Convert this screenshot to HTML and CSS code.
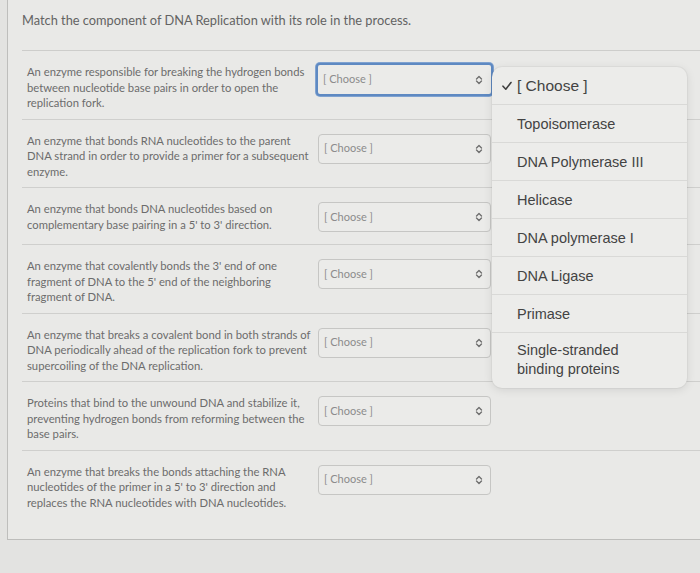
FILE: index.html
```html
<!DOCTYPE html>
<html>
<head>
<meta charset="utf-8">
<link rel="stylesheet" href="styles.css">
</head>
<body>
<div class="page">
  <div class="card">
    <div class="question-text">Match the component of DNA Replication with its role in the process.</div>
    <div class="answers">
      <div class="row">
        <div class="prompt">An enzyme responsible for breaking the hydrogen bonds<br>between nucleotide base pairs in order to open the<br>replication fork.</div>
        <div class="select focused"><span>[ Choose ]</span><svg class="updown" viewBox="0 0 8 10" width="8" height="10"><polyline points="1.5,4 4,1.5 6.5,4"/><polyline points="1.5,6 4,8.5 6.5,6"/></svg></div>
      </div>
      <div class="row">
        <div class="prompt">An enzyme that bonds RNA nucleotides to the parent<br>DNA strand in order to provide a primer for a subsequent<br>enzyme.</div>
        <div class="select"><span>[ Choose ]</span><svg class="updown" viewBox="0 0 8 10" width="8" height="10"><polyline points="1.5,4 4,1.5 6.5,4"/><polyline points="1.5,6 4,8.5 6.5,6"/></svg></div>
      </div>
      <div class="row">
        <div class="prompt">An enzyme that bonds DNA nucleotides based on<br>complementary base pairing in a 5' to 3' direction.</div>
        <div class="select"><span>[ Choose ]</span><svg class="updown" viewBox="0 0 8 10" width="8" height="10"><polyline points="1.5,4 4,1.5 6.5,4"/><polyline points="1.5,6 4,8.5 6.5,6"/></svg></div>
      </div>
      <div class="row">
        <div class="prompt">An enzyme that covalently bonds the 3' end of one<br>fragment of DNA to the 5' end of the neighboring<br>fragment of DNA.</div>
        <div class="select"><span>[ Choose ]</span><svg class="updown" viewBox="0 0 8 10" width="8" height="10"><polyline points="1.5,4 4,1.5 6.5,4"/><polyline points="1.5,6 4,8.5 6.5,6"/></svg></div>
      </div>
      <div class="row">
        <div class="prompt">An enzyme that breaks a covalent bond in both strands of<br>DNA periodically ahead of the replication fork to prevent<br>supercoiling of the DNA replication.</div>
        <div class="select"><span>[ Choose ]</span><svg class="updown" viewBox="0 0 8 10" width="8" height="10"><polyline points="1.5,4 4,1.5 6.5,4"/><polyline points="1.5,6 4,8.5 6.5,6"/></svg></div>
      </div>
      <div class="row">
        <div class="prompt">Proteins that bind to the unwound DNA and stabilize it,<br>preventing hydrogen bonds from reforming between the<br>base pairs.</div>
        <div class="select"><span>[ Choose ]</span><svg class="updown" viewBox="0 0 8 10" width="8" height="10"><polyline points="1.5,4 4,1.5 6.5,4"/><polyline points="1.5,6 4,8.5 6.5,6"/></svg></div>
      </div>
      <div class="row last">
        <div class="prompt">An enzyme that breaks the bonds attaching the RNA<br>nucleotides of the primer in a 5' to 3' direction and<br>replaces the RNA nucleotides with DNA nucleotides.</div>
        <div class="select"><span>[ Choose ]</span><svg class="updown" viewBox="0 0 8 10" width="8" height="10"><polyline points="1.5,4 4,1.5 6.5,4"/><polyline points="1.5,6 4,8.5 6.5,6"/></svg></div>
      </div>
    </div>
  </div>

  <div class="menu">
    <div class="item checked"><svg class="check" viewBox="0 0 10 10" width="10" height="10"><polyline points="1,5.2 3.8,8.2 9,1.5"/></svg>[ Choose ]</div>
    <div class="item">Topoisomerase</div>
    <div class="item">DNA Polymerase III</div>
    <div class="item">Helicase</div>
    <div class="item">DNA polymerase I</div>
    <div class="item">DNA Ligase</div>
    <div class="item">Primase</div>
    <div class="item multi">Single-stranded<br>binding proteins</div>
  </div>
</div>
</body>
</html>
```

FILE: styles.css
```css
html, body {
  margin: 0;
  padding: 0;
}
body {
  background: #e3e3e1;
  width: 700px;
  height: 573px;
  overflow: hidden;
  font-family: Lato, "Open Sans", sans-serif;
}
.page {
  position: relative;
  width: 700px;
  height: 573px;
  overflow: hidden;
}
.card {
  margin-left: 7px;
  width: 760px;
  background: #e9e9e7;
  border-left: 1px solid #bebebc;
  border-bottom: 1px solid #bdbdbb;
  padding-left: 14px;
  box-sizing: border-box;
  padding-bottom: 21px;
}
.question-text {
  padding-top: 12px;
  padding-bottom: 22px;
  font-size: 12.8px;
  line-height: 16px;
  color: #636363;
  border-bottom: 1px solid #cdcdcb;
}
.answers {
  display: flex;
  flex-direction: column;
}
.row {
  display: flex;
  align-items: flex-start;
  padding: 13px 0 8px 5px;
  border-bottom: 1px solid #cfcfcd;
}
.row.last {
  border-bottom: none;
}
.prompt {
  flex: 0 0 286px;
  font-size: 11.25px;
  line-height: 15.5px;
  color: #6c6c6c;
  white-space: nowrap;
}
.select {
  flex: 0 0 auto;
  width: 173px;
  height: 30px;
  margin-left: 5px;
  margin-top: 1px;
  margin-bottom: 4px;
  box-sizing: border-box;
  border: 1px solid #c6c6c4;
  border-radius: 4px;
  background: #ebebe9;
  display: flex;
  align-items: center;
  justify-content: space-between;
  padding: 0 7px 0 5px;
  font-size: 11px;
  color: #8c8c8c;
}
.select.focused {
  border: 2px solid #5e89c2;
  box-shadow: 0 0 0 1px #7fa2d0;
  width: 177px;
  height: 33px;
  margin-left: 3px;
  margin-top: -1px;
  padding: 0 8px 0 5px;
}
.select span {
  padding-bottom: 2px;
}
.updown {
  fill: none;
  stroke: #6f6f6f;
  stroke-width: 1.4;
  stroke-linecap: round;
  stroke-linejoin: round;
}
.menu {
  position: absolute;
  left: 492px;
  top: 67px;
  width: 195px;
  background: #ececea;
  border-radius: 10px;
  box-shadow: 0 2px 10px rgba(0, 0, 0, 0.10), 0 0 0 1px rgba(0, 0, 0, 0.03);
  font-family: "Liberation Sans", Arial, sans-serif;
  font-size: 14.5px;
  color: #434343;
  overflow: hidden;
}
.item {
  height: 38px;
  box-sizing: border-box;
  padding-left: 25px;
  display: flex;
  align-items: center;
  border-bottom: 1px solid #d9d9d7;
  position: relative;
}
.item.checked {
  font-size: 15.5px;
}
.item.multi {
  height: 55px;
  border-bottom: none;
  line-height: 19px;
  padding-bottom: 2px;
}
.check {
  position: absolute;
  left: 10px;
  top: 14px;
  fill: none;
  stroke: #3f3f3f;
  stroke-width: 1.6;
  stroke-linecap: round;
  stroke-linejoin: round;
}
```
